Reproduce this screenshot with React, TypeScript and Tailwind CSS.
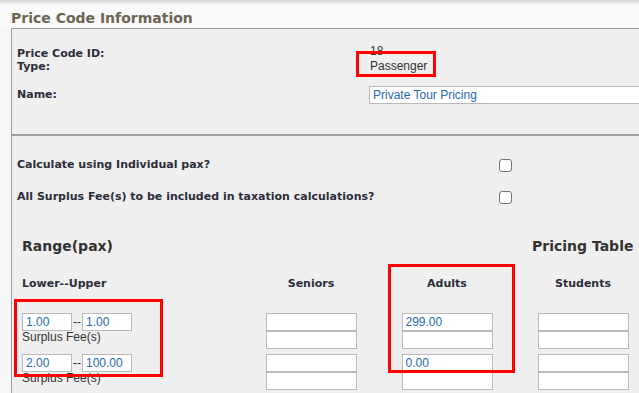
import React from 'react';

const label = "font-['DejaVu_Sans',Verdana,sans-serif] font-bold text-[11px] text-[#2d2d3a]";
const plain = "font-['Liberation_Sans',Arial,sans-serif] text-[12px] text-[#333333]";

const Field = ({ value = '', className = '' }: { value?: string; className?: string }) => (
  <input
    readOnly
    value={value}
    className={`block h-[18px] shrink-0 border border-[#b9b9b9] bg-white px-[3px] font-['Liberation_Sans',Arial,sans-serif] text-[12px] leading-[16px] text-[#1f69ae] outline-none ${className}`}
  />
);

const PriceCell = ({ top = '', bottom = '' }: { top?: string; bottom?: string }) => (
  <div className="flex flex-col items-center">
    <Field value={top} className="w-[91px]" />
    <Field value={bottom} className="w-[91px]" />
  </div>
);

const RangeCell = ({ lower, upper }: { lower: string; upper: string }) => (
  <div className="pl-[5px]">
    <div className="flex h-[18px] items-center">
      <Field value={lower} className="w-[50px]" />
      <span className={`${plain} w-[10px] text-center leading-[18px]`}>--</span>
      <Field value={upper} className="w-[50px]" />
    </div>
    <div className={`${plain} h-[18px] leading-[12px]`}>Surplus Fee(s)</div>
  </div>
);

const Check = () => (
  <span className="block h-[13px] w-[13px] shrink-0 rounded-[3px] border border-[#767676] bg-white" />
);

export default function App() {
  const rows = [
    { lower: '1.00', upper: '1.00', adults: '299.00' },
    { lower: '2.00', upper: '100.00', adults: '0.00' },
  ];

  return (
    <div className="relative h-[393px] w-full overflow-hidden bg-[#f7f7f7]">
      {/* header */}
      <div className="h-[28px] bg-[linear-gradient(to_bottom,#d4d4d4,#f9f9f9_5px)] pl-[11px] pt-[10px]">
        <h1 className="font-['DejaVu_Sans',Verdana,sans-serif] text-[14px] font-bold leading-[17px] text-[#6e6455]">
          Price Code Information
        </h1>
      </div>

      <div className="ml-[11px] h-[400px] border-l border-t border-[#9c9c9c] bg-[#efefef]">
        {/* general info */}
        <div className="h-[105px] pl-[5px] pt-[18px]">
          <div className="flex leading-[13px]">
            <div className={`${label} w-[353px] shrink-0`}>Price Code ID:</div>
            <div className={`${plain} -mt-[2px]`}>18</div>
          </div>
          <div className="flex leading-[13px]">
            <div className={`${label} w-[353px] shrink-0`}>Type:</div>
            <div className={plain}>Passenger</div>
          </div>
          <div className="mt-[13px] flex items-center">
            <div className={`${label} w-[352px] shrink-0`}>Name:</div>
            <Field value="Private Tour Pricing" className="w-[300px]" />
          </div>
        </div>

        <div className="h-[2px] bg-[#a0a0a0]" />

        {/* options */}
        <div className="pl-[5px] pt-[20px]">
          <div className="flex h-[18px] items-center">
            <div className={`${label} w-[482px] shrink-0`}>Calculate using Individual pax?</div>
            <Check />
          </div>
          <div className="mt-[14px] flex h-[18px] items-center">
            <div className={`${label} w-[482px] shrink-0`}>All Surplus Fee(s) to be included in taxation calculations?</div>
            <Check />
          </div>

          {/* pricing table */}
          <div className="mt-[30px] grid grid-cols-[226px_136px_136px_136px]">
            <div className="h-[20px] pl-[5px] font-['DejaVu_Sans',Verdana,sans-serif] text-[14px] font-bold leading-[20px] text-[#333333]">
              Range(pax)
            </div>
            <div className="col-start-4 whitespace-nowrap pl-[17px] font-['DejaVu_Sans',Verdana,sans-serif] text-[14px] font-bold leading-[20px] text-[#333333]">
              Pricing Table
            </div>

            <div className={`${label} mt-[20px] h-[16px] pl-[5px] leading-[16px]`}>Lower--Upper</div>
            <div className={`${label} mt-[20px] h-[16px] text-center leading-[16px]`}>Seniors</div>
            <div className={`${label} mt-[20px] h-[16px] text-center leading-[16px]`}>Adults</div>
            <div className={`${label} mt-[20px] h-[16px] text-center leading-[16px]`}>Students</div>

            {rows.map((r, i) => (
              <React.Fragment key={i}>
                <div className={i === 0 ? 'mt-[21px]' : 'mt-[5px]'}>
                  <RangeCell lower={r.lower} upper={r.upper} />
                </div>
                <div className={i === 0 ? 'mt-[21px]' : 'mt-[5px]'}>
                  <PriceCell />
                </div>
                <div className={i === 0 ? 'mt-[21px]' : 'mt-[5px]'}>
                  <PriceCell top={r.adults} />
                </div>
                <div className={i === 0 ? 'mt-[21px]' : 'mt-[5px]'}>
                  <PriceCell />
                </div>
              </React.Fragment>
            ))}
          </div>
        </div>
      </div>

      {/* red annotation boxes */}
      <div className="absolute left-[356px] top-[51px] h-[26px] w-[80px] border-[3px] border-[#ff0000]" />
      <div className="absolute left-[14px] top-[299px] h-[78px] w-[149px] border-[3px] border-[#ff0000]" />
      <div className="absolute left-[388px] top-[264px] h-[109px] w-[127px] border-[3px] border-[#ff0000]" />
    </div>
  );
}
